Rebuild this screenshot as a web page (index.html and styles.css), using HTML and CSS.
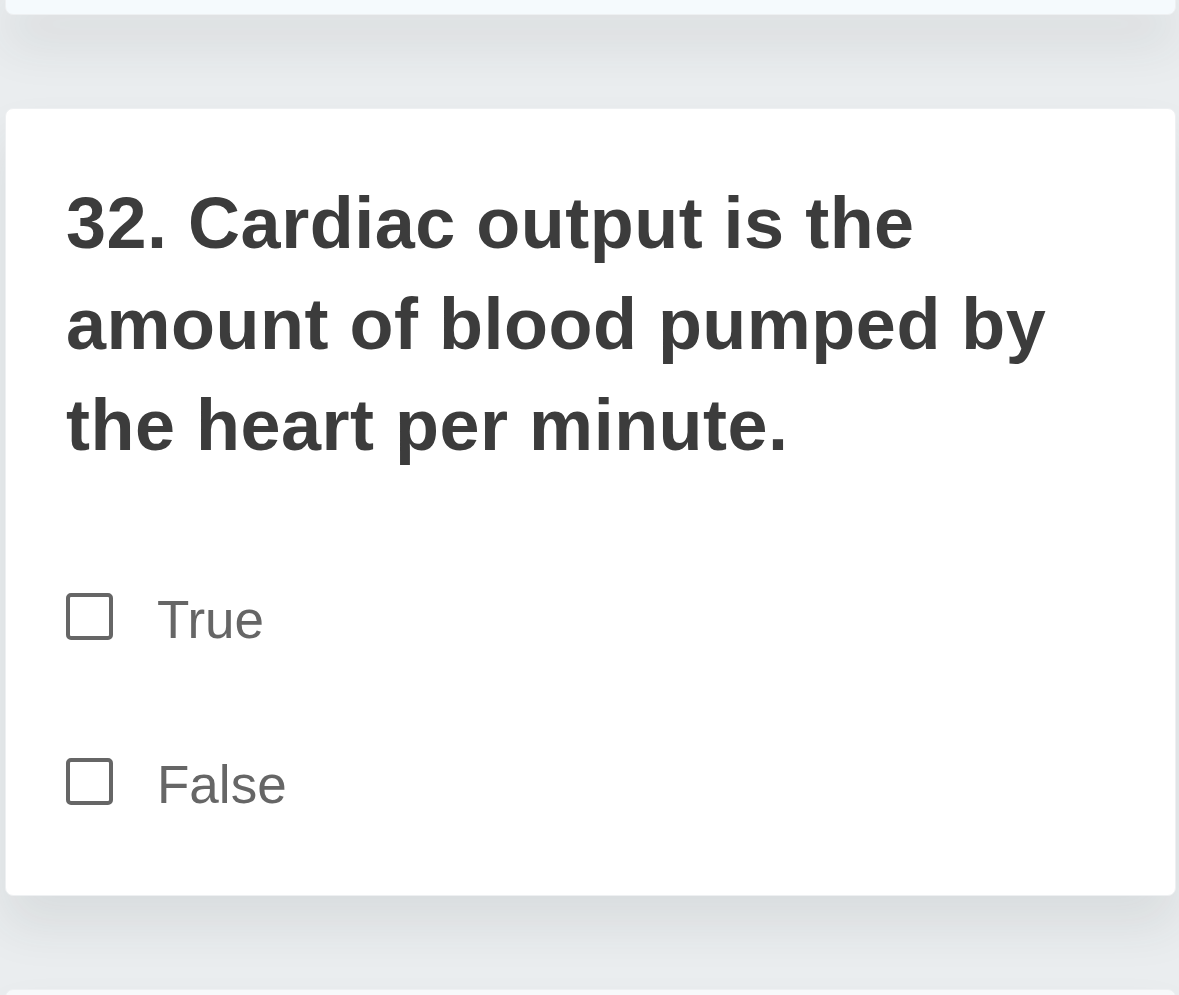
FILE: index.html
```html
<!DOCTYPE html>
<html lang="en">
<head>
<meta charset="utf-8">
<title>Quiz</title>
<link rel="stylesheet" href="styles.css">
</head>
<body>
<main class="list">
  <section class="card card-prev"></section>
  <section class="card question">
    <h2 class="q-title">32. Cardiac output is the amount of blood pumped by the heart per minute.</h2>
    <div class="options">
      <label class="option"><span class="box"></span><span class="opt-text">True</span></label>
      <label class="option"><span class="box"></span><span class="opt-text">False</span></label>
    </div>
  </section>
  <section class="card card-next"></section>
</main>
</body>
</html>
```
FILE: styles.css
```css
html, body {
  margin: 0;
  padding: 0;
  background: #eaedef;
  font-family: "Liberation Sans", Arial, sans-serif;
  overflow: hidden;
}
.list {
  display: flex;
  flex-direction: column;
  gap: 93px;
  margin: 0 3px 0 5px;
}
.card {
  background: #ffffff;
  border: 1px solid #eef0f2;
  border-radius: 8px;
  box-shadow: 0 30px 50px 0 rgba(40, 50, 60, 0.09);
}
.card-prev {
  height: 40px;
  margin-top: -27px;
  background: #f5fafd;
}
.card-next {
  height: 60px;
  background: #f7f9fa;
}
.question {
  padding: 64px 56px 77px 60px;
}
.q-title {
  margin: 0;
  font-size: 72px;
  line-height: 101px;
  font-weight: 700;
  letter-spacing: 0.5px;
  color: #3c3c3c;
}
.options {
  display: flex;
  flex-direction: column;
  gap: 98px;
  margin-top: 110px;
}
.option {
  display: flex;
  align-items: flex-start;
  gap: 44px;
  font-size: 53px;
  line-height: 67px;
  color: #666666;
}
.box {
  width: 47px;
  height: 47px;
  margin-top: 7px;
  box-sizing: border-box;
  border: 4px solid #666666;
  border-radius: 5px;
  flex: none;
}
```
